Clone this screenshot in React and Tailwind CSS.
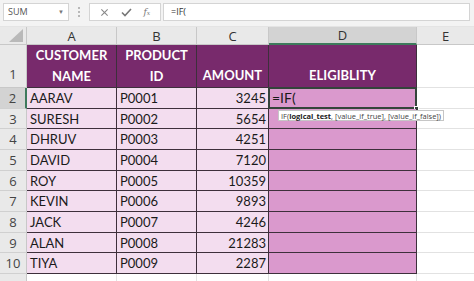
import React from "react";

const rows = [
  ["AARAV", "P0001", "3245"],
  ["SURESH", "P0002", "5654"],
  ["DHRUV", "P0003", "4251"],
  ["DAVID", "P0004", "7120"],
  ["ROY", "P0005", "10359"],
  ["KEVIN", "P0006", "9893"],
  ["JACK", "P0007", "4246"],
  ["ALAN", "P0008", "21283"],
  ["TIYA", "P0009", "2287"],
];

const rowHeights = ["h-[21px]", "h-[20px]", "h-[21px]", "h-[21px]", "h-[20px]", "h-[21px]", "h-[21px]", "h-[20px]", "h-[21px]"];

const cell = "border-r border-b border-[#3d2f3b] flex items-center overflow-hidden";

const App = () => {
  return (
    <div className="w-[474px] h-[281px] overflow-hidden bg-white font-['Lato',sans-serif] text-[#1a1a1a]">
      {/* formula bar */}
      <div className="h-[27px] bg-[#f3f3f3] flex items-start pt-[3px] pl-[3px] pr-[4px] border-b border-[#e4e4e4]">
        <div className="w-[66px] h-[18px] bg-white border border-[#d4d4d4] flex items-center justify-between px-[4px] font-['Open_Sans',sans-serif] text-[9px] text-[#555]">
          <span>SUM</span>
          <span className="text-[6px] text-[#777]">▼</span>
        </div>
        <div className="w-[20px] h-[18px] flex items-center justify-center">
          <div className="flex flex-col gap-[2px]">
            <span className="w-[2px] h-[2px] bg-[#b8b8b8]" />
            <span className="w-[2px] h-[2px] bg-[#b8b8b8]" />
            <span className="w-[2px] h-[2px] bg-[#b8b8b8]" />
          </div>
        </div>
        <div className="w-[72px] h-[18px] bg-white border border-[#d4d4d4] flex items-center justify-around px-[4px] text-[#777]">
          <svg width="9" height="9" viewBox="0 0 10 10" stroke="#888" strokeWidth="1.2" fill="none">
            <path d="M1.5 1.5l7 7M8.5 1.5l-7 7" />
          </svg>
          <svg width="11" height="9" viewBox="0 0 11 9" stroke="#777" strokeWidth="1.6" fill="none">
            <path d="M1 4.5l3 3 6-6.5" />
          </svg>
          <span className="font-['DejaVu_Serif',serif] italic text-[9px] text-[#777] leading-none">
            f<span className="text-[6px]">x</span>
          </span>
        </div>
        <div className="ml-[2px] flex-1 h-[18px] bg-white border border-[#d4d4d4] flex items-center px-[7px] font-['Open_Sans',sans-serif] text-[9px] text-[#333]">
          =IF(
        </div>
      </div>

      {/* column headers */}
      <div className="grid grid-cols-[27px_90px_80px_72px_148px_57px] h-[18px] leading-[16px] font-['Open_Sans',sans-serif] text-[13px] text-[#333]">
        <div className="bg-[#e9e9e9] border-r border-b border-[#c8c8c8] flex items-end justify-end pr-[3px] pb-[2px]">
          <div className="w-0 h-0 border-l-[14px] border-l-transparent border-b-[13px] border-b-[#b9b9b9]" />
        </div>
        <div className="bg-[#e9e9e9] border-r border-b border-[#c8c8c8] flex items-center justify-center">A</div>
        <div className="bg-[#e9e9e9] border-r border-b border-[#c8c8c8] flex items-center justify-center">B</div>
        <div className="bg-[#e9e9e9] border-r border-b border-[#c8c8c8] flex items-center justify-center">C</div>
        <div className="bg-[#d3d3d3] border-r border-[#c8c8c8] border-b-2 border-b-[#3e7a5c] flex items-center justify-center">D</div>
        <div className="bg-[#e9e9e9] border-b border-[#c8c8c8] flex items-center justify-center">E</div>
      </div>

      {/* header row */}
      <div className="grid grid-cols-[27px_90px_80px_72px_148px_57px] h-[43px]">
        <div className="bg-[#e9e9e9] border-r border-b border-[#c8c8c8] flex items-end justify-center pb-[3px] font-['Open_Sans',sans-serif] text-[13px] text-[#444]">
          1
        </div>
        <div className={`${cell} bg-[#782a6c] justify-center text-center text-white font-bold text-[13px] leading-[21px]`}>
          CUSTOMER<br />NAME
        </div>
        <div className={`${cell} bg-[#782a6c] justify-center text-center text-white font-bold text-[13px] leading-[21px]`}>
          PRODUCT<br />ID
        </div>
        <div className={`${cell} bg-[#782a6c] justify-center items-end! pb-[2px] text-white font-bold text-[13px]`}>
          AMOUNT
        </div>
        <div className={`${cell} bg-[#782a6c] justify-center items-end! pb-[2px] text-white font-bold text-[13px]`}>
          ELIGIBLITY
        </div>
        <div className="border-b border-[#e2e2e2]" />
      </div>

      {/* data rows */}
      {rows.map((r, i) => (
        <div key={i} className={`grid grid-cols-[27px_90px_80px_72px_148px_57px] grid-rows-1 leading-[16px] ${rowHeights[i]}`}>
          <div
            className={`border-b border-[#d0d0d0] flex items-center justify-center font-['Open_Sans',sans-serif] text-[13px] text-[#444] ${
              i === 0 ? "bg-[#d3d3d3] border-r-2 border-r-[#3e7a5c]" : "bg-[#e9e9e9] border-r border-r-[#c8c8c8]"
            }`}
          >
            {i + 2}
          </div>
          <div className={`${cell} bg-[#f3ddef] pl-[3px] text-[13px]`}>{r[0]}</div>
          <div className={`${cell} bg-[#f3ddef] pl-[3px] text-[13px]`}>{r[1]}</div>
          <div className={`${cell} bg-[#f3ddef] justify-end pr-[2px] text-[13px]`}>{r[2]}</div>
          <div className={`border-r border-b border-[#3d2f3b] flex items-center bg-[#da99cd] relative text-[14px]`}>
            {i === 0 && (
              <>
                <div className="absolute inset-[-1px] border-2 border-[#34443b]" />
                <span className="pl-[3px] leading-none">=IF(</span>
                <div className="absolute right-[-3px] bottom-[-3px] w-[5px] h-[5px] bg-[#34443b] border border-white" />
                <div className="absolute left-[9px] top-[22px] z-10 h-[11px] px-[2px] bg-white border border-[#c6c6c6] flex items-center whitespace-nowrap font-['Open_Sans',sans-serif] text-[7.5px] text-[#444]">
                  IF(<b className="text-[#222]">logical_test</b>, [value_if_true], [value_if_false])
                </div>
              </>
            )}
          </div>
          <div className="border-b border-[#e2e2e2]" />
        </div>
      ))}

      {/* row 11 */}
      <div className="grid grid-cols-[27px_90px_80px_72px_148px_57px] h-[10px]">
        <div className="bg-[#e9e9e9] border-r border-[#c8c8c8]" />
        <div className="border-r border-[#e2e2e2]" />
        <div className="border-r border-[#e2e2e2]" />
        <div className="border-r border-[#e2e2e2]" />
        <div className="border-r border-[#e2e2e2]" />
        <div />
      </div>
    </div>
  );
};

export default App;
